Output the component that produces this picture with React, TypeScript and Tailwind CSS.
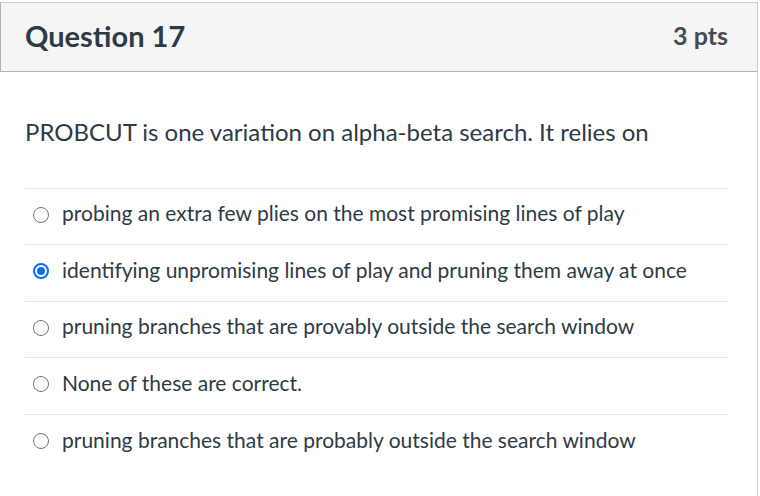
import React from 'react';

const options = [
  { text: 'probing an extra few plies on the most promising lines of play', h: 'h-[56px]' },
  { text: 'identifying unpromising lines of play and pruning them away at once', h: 'h-[57px]', checked: true },
  { text: 'pruning branches that are provably outside the search window', h: 'h-[56px]' },
  { text: 'None of these are correct.', h: 'h-[57px]' },
  { text: 'pruning branches that are probably outside the search window', h: 'h-[57px]' },
];

const Radio = ({ checked }: { checked?: boolean }) =>
  checked ? (
    <span className="flex h-4 w-4 shrink-0 items-center justify-center rounded-full border-2 border-[#0a6cf5] bg-white">
      <span className="h-2 w-2 rounded-full bg-[#0a6cf5]" />
    </span>
  ) : (
    <span className="h-4 w-4 shrink-0 rounded-full border border-[#767676] bg-white" />
  );

export default function App() {
  return (
    <div className="h-[496px] w-[760px] overflow-hidden bg-white font-['Lato',sans-serif] text-[#2d3b45]">
      <div className="mt-[2px] w-[758px] border-t border-r border-[#c7cdd1]">
        {/* Header */}
        <div className="flex h-[69px] items-center justify-between border-b border-l border-[#aeb4b8] bg-[#f5f5f5] pb-[3px] pl-[24px] pr-[29px]">
          <h2 className="text-[29px] font-bold leading-none">Question 17</h2>
          <span className="text-[25px] font-bold leading-none text-[#444c52]">3 pts</span>
        </div>

        {/* Body */}
        <div className="pl-[25px] pr-[29px] pb-[80px]">
          <p className="pt-[45px] pb-[41px] text-[24px] leading-[30px]">
            PROBCUT is one variation on alpha-beta search. It relies on
          </p>
          <div>
            {options.map((o) => (
              <label
                key={o.text}
                className={`flex items-center gap-[13px] border-t border-[#e3e6e8] pb-[4px] pl-[8px] ${o.h}`}
              >
                <Radio checked={o.checked} />
                <span className="mb-[4px] text-[21px] leading-none">{o.text}</span>
              </label>
            ))}
          </div>
        </div>
      </div>
    </div>
  );
}
